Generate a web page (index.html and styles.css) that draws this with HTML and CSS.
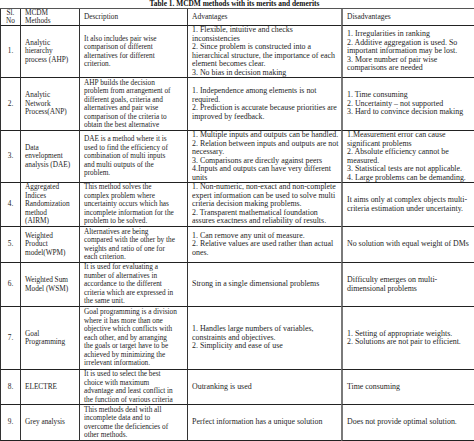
FILE: index.html
```html
<!DOCTYPE html>
<html>
<head>
<meta charset="utf-8">
<link rel="stylesheet" href="styles.css">
</head>
<body>
<div class="title">Table 1. MCDM methods with its merits and demerits</div>
<div class="table">
  <div class="c n"><div>Sl.<br>No</div></div>
  <div class="c"><div>MCDM<br>Methods</div></div>
  <div class="c"><div>Description</div></div>
  <div class="c h"><div>Advantages</div></div>
  <div class="c d h"><div>Disadvantages</div></div>

  <div class="c n"><div>1.</div></div>
  <div class="c"><div>Analytic<br>hierarchy<br>process (AHP)</div></div>
  <div class="c"><div>It also includes pair wise<br>comparison of different<br>alternatives for different<br>criterion.</div></div>
  <div class="c w"><div>1. Flexible, intuitive and checks<br>inconsistencies<br>2. Since problem is constructed into a<br>hierarchical structure, the importance of each<br>element becomes clear.<br>3. No bias in decision making</div></div>
  <div class="c d w"><div>1. Irregularities in ranking<br>2. Additive aggregation is used. So<br>important information may be lost.<br>3. More number of pair wise<br>comparisons are needed</div></div>

  <div class="c n"><div>2.</div></div>
  <div class="c"><div>Analytic<br>Network<br>Process(ANP)</div></div>
  <div class="c"><div>AHP builds the decision<br>problem from arrangement of<br>different goals, criteria and<br>alternatives and pair wise<br>comparison of the criteria to<br>obtain the best alternative</div></div>
  <div class="c w"><div>1. Independence among elements is not<br>required.<br>2. Prediction is accurate because priorities are<br>improved by feedback.</div></div>
  <div class="c d w"><div>1. Time consuming<br>2. Uncertainty – not supported<br>3. Hard to convince decision making</div></div>

  <div class="c n"><div>3.</div></div>
  <div class="c"><div>Data<br>envelopment<br>analysis (DAE)</div></div>
  <div class="c"><div>DAE is a method where it is<br>used to find the efficiency of<br>combination of multi inputs<br>and multi outputs of the<br>problem.</div></div>
  <div class="c w"><div>1. Multiple inputs and outputs can be handled.<br>2. Relation between inputs and outputs are not<br>necessary.<br>3. Comparisons are directly against peers<br>4.Inputs and outputs can have very different<br>units</div></div>
  <div class="c d w"><div>1.Measurement error can cause<br>significant problems<br>2. Absolute efficiency cannot be<br>measured.<br>3. Statistical tests are not applicable.<br>4. Large problems can be demanding.</div></div>

  <div class="c n"><div>4.</div></div>
  <div class="c"><div>Aggregated<br>Indices<br>Randomization<br>method<br>(AIRM)</div></div>
  <div class="c"><div>This method solves the<br>complex problem where<br>uncertainty occurs which has<br>incomplete information for the<br>problem to be solved.</div></div>
  <div class="c w"><div>1. Non-numeric, non-exact and non-complete<br>expert information can be used to solve multi<br>criteria decision making problems.<br>2. Transparent mathematical foundation<br>assures exactness and reliability of results.</div></div>
  <div class="c d w"><div>It aims only at complex objects multi-<br>criteria estimation under uncertainty.</div></div>

  <div class="c n"><div>5.</div></div>
  <div class="c"><div>Weighted<br>Product<br>model(WPM)</div></div>
  <div class="c"><div>Alternatives are being<br>compared with the other by the<br>weights and ratio of one for<br>each criterion.</div></div>
  <div class="c w"><div>1. Can remove any unit of measure.<br>2. Relative values are used rather than actual<br>ones.</div></div>
  <div class="c d w"><div>No solution with equal weight of DMs</div></div>

  <div class="c n"><div>6.</div></div>
  <div class="c"><div>Weighted Sum<br>Model (WSM)</div></div>
  <div class="c"><div>It is used for evaluating a<br>number of alternatives in<br>accordance to the different<br>criteria which are expressed in<br>the same unit.</div></div>
  <div class="c w"><div>Strong in a single dimensional problems</div></div>
  <div class="c d w"><div>Difficulty emerges on multi-<br>dimensional problems</div></div>

  <div class="c n"><div>7.</div></div>
  <div class="c"><div>Goal<br>Programming</div></div>
  <div class="c"><div>Goal programming is a division<br>where it has more than one<br>objective which conflicts with<br>each other, and by arranging<br>the goals or target have to be<br>achieved by minimizing the<br>irrelevant information.</div></div>
  <div class="c w"><div>1. Handles large numbers of variables,<br>constraints and objectives.<br>2. Simplicity and ease of use</div></div>
  <div class="c d w"><div>1. Setting of appropriate weights.<br>2. Solutions are not pair to efficient.</div></div>

  <div class="c n"><div>8.</div></div>
  <div class="c"><div>ELECTRE</div></div>
  <div class="c"><div>It is used to select the best<br>choice with maximum<br>advantage and least conflict in<br>the function of various criteria</div></div>
  <div class="c w"><div>Outranking is used</div></div>
  <div class="c d w"><div>Time consuming</div></div>

  <div class="c n"><div>9.</div></div>
  <div class="c"><div>Grey analysis</div></div>
  <div class="c"><div>This methods deal with all<br>incomplete data and to<br>overcome the deficiencies of<br>other methods.</div></div>
  <div class="c w"><div>Perfect information has a unique solution</div></div>
  <div class="c d w"><div>Does not provide optimal solution.</div></div>
</div>
</body>
</html>
```
FILE: styles.css
```css
html, body {
  margin: 0;
  padding: 0;
  background: #ffffff;
}
body {
  width: 474px;
  height: 441px;
  overflow: hidden;
  font-family: "Liberation Serif", "Times New Roman", serif;
  color: #1e1e1e;
}
.title {
  height: 8px;
  font-size: 7.4px;
  line-height: 8px;
  font-weight: bold;
  text-align: center;
  padding-right: 5px;
  white-space: nowrap;
  color: #111;
}
.table {
  display: grid;
  grid-template-columns: 20px 59px 108px 154px 133px;
  grid-template-rows: 17px 52px 53px 52px 44px 36px 44px 63px 35px 36px;
  border-top: 1px solid #555;
  font-size: 7.3px;
  line-height: 8.5px;
}
.c {
  box-sizing: border-box;
  display: flex;
  align-items: center;
  border-left: 1px solid #333;
  border-bottom: 1px solid #222;
  padding-left: 4px;
  white-space: nowrap;
  overflow: visible;
}
.c.w {
  font-size: 7.9px;
}
.c.h {
  font-size: 7.5px;
}
.c.n {
  justify-content: center;
  padding-left: 0;
  text-align: center;
}
.c.d {
  border-left: 2px solid #7a7a7a;
  padding-left: 4px;
}
```
